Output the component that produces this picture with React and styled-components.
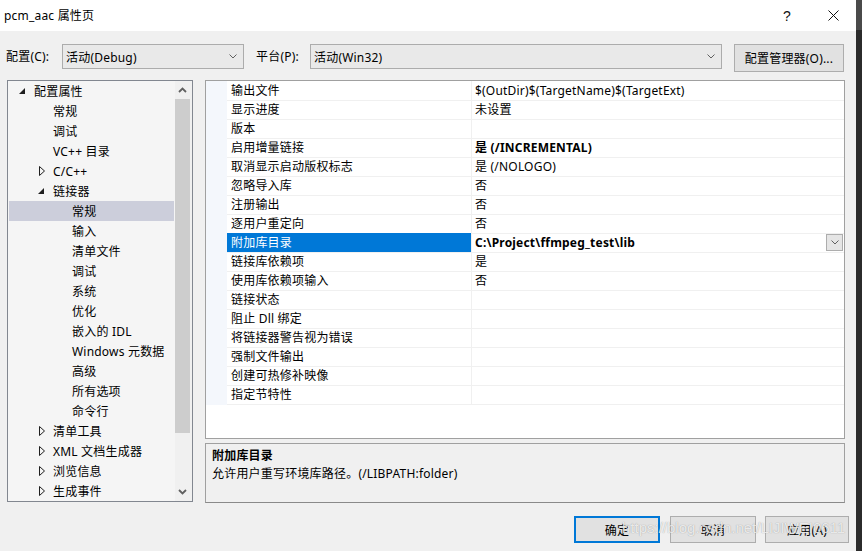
import React from 'react';
import styled, { createGlobalStyle } from 'styled-components';

const Global = createGlobalStyle`
  html, body { margin: 0; padding: 0; background: #2b2b2b; }
  body {
    font-family: "Noto Sans", "Noto Sans CJK SC", sans-serif;
    font-size: 12px;
    letter-spacing: 0.2px;
    color: #000;
  }
  #root { width: 862px; height: 551px; overflow: hidden; }
  * { box-sizing: border-box; }
`;

const Screen = styled.div`
  display: flex;
  width: 862px;
  height: 551px;
`;

const Dialog = styled.div`
  position: relative;
  width: 856px;
  display: flex;
  flex-direction: column;
  background: #f0f0f0;
`;

const Edge = styled.div`
  flex: 1;
  background: linear-gradient(#4a4a4a 0 30px, #2b2b2b 30px);
`;

const TitleBar = styled.div`
  height: 31px;
  background: #fff;
  display: flex;
  align-items: center;
  padding-left: 4px;
`;

const Title = styled.div`
  flex: 1;
  font-size: 12px;
  line-height: 16px;
`;

const TitleBtn = styled.div`
  width: 46px;
  height: 31px;
  display: flex;
  align-items: center;
  justify-content: center;
  font-family: "Liberation Sans", sans-serif;
  font-size: 14px;
  color: #111;
`;

const ConfigRow = styled.div`
  display: flex;
  align-items: flex-start;
  margin-top: 13px;
  height: 28px;
  padding-left: 6px;
`;

const Label = styled.div`
  width: ${p => p.$w}px;
  margin-left: ${p => p.$ml || 0}px;
  height: 25px;
  line-height: 25px;
  white-space: nowrap;
`;

const Combo = styled.div`
  width: ${p => p.$w}px;
  height: 25px;
  border: 1px solid #acacac;
  background: #e9e9e9;
  display: flex;
  align-items: center;
  padding: 0 6px 0 3px;
  justify-content: space-between;
`;

const PushButton = styled.div`
  width: ${p => p.$w}px;
  height: ${p => p.$h}px;
  margin-left: ${p => p.$ml || 0}px;
  border: ${p => (p.$primary ? '2px solid #0078d7' : '1px solid #adadad')};
  background: #e1e1e1;
  display: flex;
  align-items: center;
  justify-content: center;
  white-space: nowrap;
`;

const Main = styled.div`
  display: flex;
  margin-top: 8px;
  padding-left: 7px;
  height: 423px;
`;

const Tree = styled.div`
  width: 186px;
  height: 422px;
  border: 1px solid #828790;
  background: #f5f5f5;
  display: flex;
`;

const TreeList = styled.div`
  flex: 1;
  padding: 0 1px;
  display: flex;
  flex-direction: column;
`;

const TreeRow = styled.div`
  height: 20px;
  display: flex;
  align-items: center;
  padding-left: ${p => 10 + p.$level * 19}px;
  background: ${p => (p.$sel ? '#cccedb' : 'transparent')};
  white-space: nowrap;
`;

const TreeText = styled.span`
  line-height: 18px;
  padding-top: 2px;
`;

const Toggle = styled.div`
  width: 15px;
  height: 20px;
  display: flex;
  align-items: center;
  padding-left: ${p => (p.$open ? 0 : 1)}px;
`;

const ScrollBar = styled.div`
  width: 17px;
  display: flex;
  flex-direction: column;
  background: #f0f0f0;
  padding-right: 2px;
`;

const ScrollArrow = styled.div`
  height: 18px;
  display: flex;
  align-items: center;
  justify-content: center;
`;

const ScrollTrack = styled.div`
  flex: 1;
  display: flex;
  flex-direction: column;
`;

const Thumb = styled.div`
  height: 334px;
  background: #cdcdcd;
`;

const RightCol = styled.div`
  width: 640px;
  margin-left: 12px;
  display: flex;
  flex-direction: column;
  gap: 4px;
`;

const Grid = styled.div`
  height: 359px;
  border: 1px solid #a0a0a0;
  background: #fff;
  display: flex;
  flex-direction: column;
`;

const GridRow = styled.div`
  display: grid;
  grid-template-columns: 21px 245px 1fr;
  height: 19px;
`;

const Strip = styled.div`
  background: #f4f7fc;
`;

const NameCell = styled.div`
  border-bottom: 1px solid #f0f0f0;
  border-right: 1px solid #f0f0f0;
  padding: 1px 0 0 4px;
  line-height: 18px;
  white-space: nowrap;
  background: ${p => (p.$sel ? '#0078d7' : 'transparent')};
  color: ${p => (p.$sel ? '#fff' : '#000')};
`;

const ValueCell = styled.div`
  border-bottom: 1px solid #f0f0f0;
  padding-left: 3px;
  white-space: nowrap;
  font-weight: ${p => (p.$bold ? 700 : 400)};
  display: flex;
  align-items: center;
  justify-content: space-between;
`;

const ValueText = styled.span`
  line-height: 18px;
  padding-top: 1px;
`;

const DropBtn = styled.div`
  width: 17px;
  height: 17px;
  border: 1px solid #adadad;
  background: #e5e5e5;
  display: flex;
  align-items: center;
  justify-content: center;
  margin-right: 1px;
`;

const Desc = styled.div`
  height: 60px;
  border: 1px solid #a0a0a0;
  border-bottom-color: #8a8a8a;
  background: #f0f0f0;
  padding: 3px 6px;
  line-height: 18px;
`;

const DescTitle = styled.div`
  font-weight: 700;
`;

const ButtonRow = styled.div`
  display: flex;
  justify-content: flex-end;
  margin-top: 13px;
  padding-right: 7px;
`;

const Watermark = styled.div`
  position: absolute;
  left: 622px;
  top: 519px;
  font-family: "Liberation Sans", sans-serif;
  font-size: 15px;
  letter-spacing: 0;
  color: rgba(255, 255, 255, 0.8);
  text-shadow: 0 0 1px rgba(90, 90, 90, 0.6);
  pointer-events: none;
  white-space: nowrap;
`;

const Chevron = ({ color = '#606060' }) => (
  <svg width="8" height="5" viewBox="0 0 8 5">
    <polyline points="0.5,0.5 4,4 7.5,0.5" fill="none" stroke={color} strokeWidth="1" />
  </svg>
);

const ScrollChevron = ({ up }) => (
  <svg width="9" height="6" viewBox="0 0 9 6">
    <polyline
      points={up ? '1,5 4.5,1.5 8,5' : '1,1 4.5,4.5 8,1'}
      fill="none"
      stroke="#606060"
      strokeWidth="1.8"
    />
  </svg>
);

const Expanded = () => (
  <svg width="6" height="6" viewBox="0 0 6 6">
    <polygon points="6,0 6,6 0,6" fill="#1e1e1e" />
  </svg>
);

const Collapsed = () => (
  <svg width="6" height="10" viewBox="0 0 6 10">
    <polygon points="0.5,0.5 5.5,5 0.5,9.5" fill="none" stroke="#1e1e1e" strokeWidth="1" />
  </svg>
);

const treeItems = [
  { t: '配置属性', l: 0, tog: 'open' },
  { t: '常规', l: 1 },
  { t: '调试', l: 1 },
  { t: 'VC++ 目录', l: 1 },
  { t: 'C/C++', l: 1, tog: 'closed' },
  { t: '链接器', l: 1, tog: 'open' },
  { t: '常规', l: 2, sel: true },
  { t: '输入', l: 2 },
  { t: '清单文件', l: 2 },
  { t: '调试', l: 2 },
  { t: '系统', l: 2 },
  { t: '优化', l: 2 },
  { t: '嵌入的 IDL', l: 2 },
  { t: 'Windows 元数据', l: 2 },
  { t: '高级', l: 2 },
  { t: '所有选项', l: 2 },
  { t: '命令行', l: 2 },
  { t: '清单工具', l: 1, tog: 'closed' },
  { t: 'XML 文档生成器', l: 1, tog: 'closed' },
  { t: '浏览信息', l: 1, tog: 'closed' },
  { t: '生成事件', l: 1, tog: 'closed' },
];

const props = [
  ['输出文件', '$(OutDir)$(TargetName)$(TargetExt)'],
  ['显示进度', '未设置'],
  ['版本', ''],
  ['启用增量链接', '是 (/INCREMENTAL)', { bold: true }],
  ['取消显示启动版权标志', '是 (/NOLOGO)'],
  ['忽略导入库', '否'],
  ['注册输出', '否'],
  ['逐用户重定向', '否'],
  ['附加库目录', 'C:\\Project\\ffmpeg_test\\lib', { bold: true, sel: true }],
  ['链接库依赖项', '是'],
  ['使用库依赖项输入', '否'],
  ['链接状态', ''],
  ['阻止 Dll 绑定', ''],
  ['将链接器警告视为错误', ''],
  ['强制文件输出', ''],
  ['创建可热修补映像', ''],
  ['指定节特性', ''],
];

export default function App() {
  return (
    <>
      <Global />
      <Screen>
        <Dialog>
          <TitleBar>
            <Title>pcm_aac 属性页</Title>
            <TitleBtn>?</TitleBtn>
            <TitleBtn>
              <svg width="11" height="11" viewBox="0 0 11 11">
                <path d="M0.5 0.5 L10.5 10.5 M10.5 0.5 L0.5 10.5" stroke="#111" strokeWidth="1" />
              </svg>
            </TitleBtn>
          </TitleBar>

          <ConfigRow>
            <Label $w={56}>配置(C):</Label>
            <Combo $w={182}>
              <span>活动(Debug)</span>
              <Chevron />
            </Combo>
            <Label $w={54} $ml={12}>平台(P):</Label>
            <Combo $w={412}>
              <span>活动(Win32)</span>
              <Chevron />
            </Combo>
            <PushButton $w={110} $h={28} $ml={12}>配置管理器(O)...</PushButton>
          </ConfigRow>

          <Main>
            <Tree>
              <TreeList>
                {treeItems.map((it, i) => (
                  <TreeRow key={i} $level={it.l} $sel={it.sel}>
                    <Toggle $open={it.tog === 'open'}>
                      {it.tog === 'open' && <Expanded />}
                      {it.tog === 'closed' && <Collapsed />}
                    </Toggle>
                    <TreeText>{it.t}</TreeText>
                  </TreeRow>
                ))}
              </TreeList>
              <ScrollBar>
                <ScrollArrow>
                  <ScrollChevron up />
                </ScrollArrow>
                <ScrollTrack>
                  <Thumb />
                </ScrollTrack>
                <ScrollArrow>
                  <ScrollChevron />
                </ScrollArrow>
              </ScrollBar>
            </Tree>

            <RightCol>
              <Grid>
                {props.map(([name, val, opt = {}], i) => (
                  <GridRow key={i}>
                    <Strip />
                    <NameCell $sel={opt.sel}>{name}</NameCell>
                    <ValueCell $bold={opt.bold}>
                      <ValueText>{val}</ValueText>
                      {opt.sel && (
                        <DropBtn>
                          <Chevron />
                        </DropBtn>
                      )}
                    </ValueCell>
                  </GridRow>
                ))}
              </Grid>
              <Desc>
                <DescTitle>附加库目录</DescTitle>
                <div>允许用户重写环境库路径。(/LIBPATH:folder)</div>
              </Desc>
            </RightCol>
          </Main>

          <ButtonRow>
            <PushButton $w={86} $h={27} $primary>确定</PushButton>
            <PushButton $w={86} $h={27} $ml={10}>取消</PushButton>
            <PushButton $w={84} $h={27} $ml={9}>应用(A)</PushButton>
          </ButtonRow>

          <Watermark>https://blog.csdn.net/LIJIWEI0611</Watermark>
        </Dialog>
        <Edge />
      </Screen>
    </>
  );
}
